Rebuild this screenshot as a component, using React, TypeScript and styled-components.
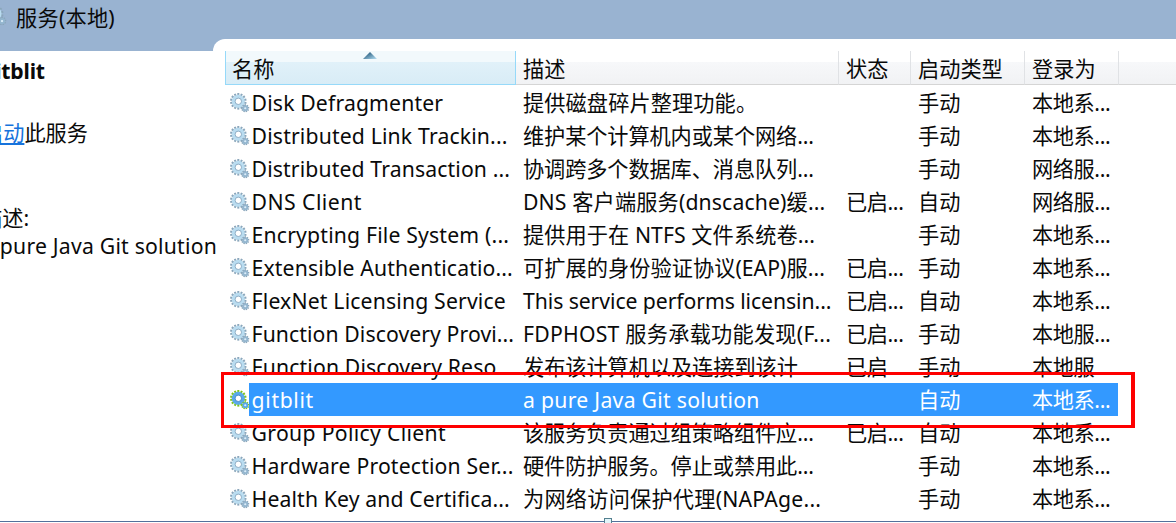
import React from "react";
import styled, { createGlobalStyle } from "styled-components";

const GlobalStyle = createGlobalStyle`
  * { box-sizing: border-box; }
  html, body { margin: 0; padding: 0; overflow: hidden; }
  body { font-family: "Noto Sans", "Noto Sans CJK SC", sans-serif; font-size: 21.2px; color: #0a0a0a; }
`;

const Window = styled.div`
  position: relative;
  width: 1176px;
  height: 523px;
  overflow: hidden;
  display: flex;
  flex-direction: column;
  background: #99b3d1;
`;

const TitleBar = styled.header`
  flex: none;
  display: flex;
  align-items: center;
  height: 39px;
  padding-bottom: 4px;
  line-height: 34px;
  letter-spacing: 0.25px;
`;

const TitleIcon = styled.span`
  flex: none;
  display: flex;
  width: 20px;
  height: 20px;
  margin: -6px 10px 0 -14px;
`;

const Body = styled.div`
  flex: 1;
  min-height: 0;
  display: flex;
`;

const DetailPane = styled.aside`
  position: relative;
  z-index: 1;
  flex: none;
  width: 213px;
  margin-top: 12px;
  padding-top: 4px;
  background: #fff;
`;

const DetailLine = styled.div<{ $gap?: number; $bold?: boolean; $shift: number; $track?: number }>`
  margin-top: ${(p) => p.$gap ?? 0}px;
  margin-left: ${(p) => p.$shift}px;
  height: 28px;
  line-height: 28px;
  white-space: nowrap;
  font-weight: ${(p) => (p.$bold ? 700 : 400)};
  letter-spacing: ${(p) => p.$track ?? 0}px;
`;

const StartLink = styled.a`
  color: #1673dc;
  text-decoration: underline;
  text-decoration-thickness: 2px;
  text-underline-offset: 2px;
`;

const ListPane = styled.main`
  flex: 1;
  min-width: 0;
  padding: 12px 0 0 12px;
  border-top-left-radius: 12px;
  background: #fff;
`;

const columns = "291px 323px 72px 114px 94px 1fr";

const HeaderRow = styled.div`
  display: grid;
  grid-template-columns: ${columns};
  height: 35px;
`;

const HeaderCell = styled.div<{ $sorted?: boolean }>`
  position: relative;
  padding-left: ${(p) => (p.$sorted ? 6 : 7)}px;
  line-height: 36px;
  height: 34px;
  border-right: 1px solid ${(p) => (p.$sorted ? "#96d9f9" : "#e0e2e5")};
  border-left: ${(p) => (p.$sorted ? "1px solid #96d9f9" : "none")};
  border-bottom: 1px solid ${(p) => (p.$sorted ? "#96d9f9" : "#d5d5d5")};
  background: ${(p) =>
    p.$sorted
      ? "linear-gradient(#f2f9fc 0 11px, #e1f1f9 11px, #d8ecf6 100%)"
      : "linear-gradient(#fff 0 11px, #f7f8fa 11px, #f1f2f4 100%)"};
  &:last-child { border-right: none; }
`;

const SortArrow = styled.svg`
  position: absolute;
  left: 136px;
  top: 1px;
`;

const Row = styled.div<{ $selected?: boolean }>`
  display: grid;
  grid-template-columns: ${columns};
  height: 33px;
  line-height: 33px;
  color: ${(p) => (p.$selected ? "#fff" : "inherit")};
  background: ${(p) =>
    p.$selected ? "linear-gradient(90deg, #fff 24px, #3399ff 24px 893px, #fff 893px)" : "none"};
`;

const Cell = styled.div<{ $track?: number }>`
  display: flex;
  align-items: center;
  min-width: 0;
  padding-left: 7px;
  white-space: nowrap;
  letter-spacing: ${(p) => p.$track ?? 0}px;
`;

const NameCell = styled(Cell)`
  padding-left: 5px;
  gap: 2.6px;
`;

const Highlight = styled.div`
  position: absolute;
  left: 221px;
  top: 372px;
  width: 914px;
  height: 56px;
  border: solid #fe0000;
  border-width: 3px 4px 3px 3px;
`;

const BottomEdge = styled.div`
  position: absolute;
  z-index: 2;
  left: 0;
  right: 0;
  top: 521px;
  height: 1px;
  background: #53709b;
`;

const Handle = styled.div`
  position: absolute;
  z-index: 3;
  left: 604px;
  top: 518px;
  width: 8px;
  height: 8px;
  border: 1px solid #53808f;
  background: #e2f4fa;
`;

const teeth = (n: number) => Array.from({ length: n }, (_, i) => (360 / n) * i);

const GearSvg = styled.svg`
  flex: none;
  overflow: visible;
`;

function Gear({ active, size = 19 }: { active?: boolean; size?: number }) {
  const edge = active ? "#7fc41c" : "#8aa6bb";
  const face = active ? "#5aa9ea" : "#b9dcf0";
  const rim = active ? "#3d7fc0" : "#7f9fba";
  return (
    <GearSvg width={size} height={size} viewBox="0 0 19 19">
      {teeth(14).map((a) => (
        <rect key={a} x="7.3" y="0" width="2" height="2.6" fill={edge} transform={`rotate(${a} 8.3 8.3)`} />
      ))}
      <circle cx="8.3" cy="8.3" r="4.8" fill="#fff" stroke={face} strokeWidth="3.4" />
      <circle cx="8.3" cy="8.3" r="3.2" fill="none" stroke={rim} strokeWidth="0.8" />
      {teeth(9).map((a) => (
        <rect key={a} x="14.5" y="11.2" width="1.5" height="2" fill={edge} transform={`rotate(${a} 15.25 15.25)`} />
      ))}
      <circle cx="15.25" cy="15.25" r="2" fill="#dceefa" stroke={active ? "#5aa9ea" : "#94b6cf"} strokeWidth="1.8" />
    </GearSvg>
  );
}

type Service = {
  name: string;
  desc: string;
  status?: string;
  start: string;
  logon: string;
  selected?: boolean;
  nameTrack: number;
  descTrack: number;
};

const services: Service[] = [
  { name: "Disk Defragmenter", desc: "提供磁盘碎片整理功能。", start: "手动", logon: "本地系...", nameTrack: 0.15, descTrack: 0.1 },
  { name: "Distributed Link Trackin...", desc: "维护某个计算机内或某个网络...", start: "手动", logon: "本地系...", nameTrack: 0.16, descTrack: -0.1 },
  { name: "Distributed Transaction ...", desc: "协调跨多个数据库、消息队列...", start: "手动", logon: "网络服...", nameTrack: 0.13, descTrack: -0.1 },
  { name: "DNS Client", desc: "DNS 客户端服务(dnscache)缓...", status: "已启...", start: "自动", logon: "网络服...", nameTrack: 0.45, descTrack: 0.14 },
  { name: "Encrypting File System (...", desc: "提供用于在 NTFS 文件系统卷...", start: "手动", logon: "本地系...", nameTrack: 0.18, descTrack: 0.08 },
  { name: "Extensible Authenticatio...", desc: "可扩展的身份验证协议(EAP)服...", status: "已启...", start: "手动", logon: "本地系...", nameTrack: 0.13, descTrack: 0.05 },
  { name: "FlexNet Licensing Service", desc: "This service performs licensin...", status: "已启...", start: "自动", logon: "本地系...", nameTrack: 0.17, descTrack: -0.07 },
  { name: "Function Discovery Provi...", desc: "FDPHOST 服务承载功能发现(F...", status: "已启...", start: "手动", logon: "本地服...", nameTrack: 0.09, descTrack: 0.24 },
  { name: "Function Discovery Reso...", desc: "发布该计算机以及连接到该计...", status: "已启...", start: "手动", logon: "本地服...", nameTrack: 0.15, descTrack: -0.05 },
  { name: "gitblit", desc: "a pure Java Git solution", start: "自动", logon: "本地系...", selected: true, nameTrack: 0.65, descTrack: 0.29 },
  { name: "Group Policy Client", desc: "该服务负责通过组策略组件应...", status: "已启...", start: "自动", logon: "本地系...", nameTrack: 0.32, descTrack: -0.1 },
  { name: "Hardware Protection Ser...", desc: "硬件防护服务。停止或禁用此...", start: "手动", logon: "本地系...", nameTrack: 0.17, descTrack: -0.1 },
  { name: "Health Key and Certifica...", desc: "为网络访问保护代理(NAPAge...", start: "手动", logon: "本地系...", nameTrack: 0.13, descTrack: 0.22 },
];

export default function App() {
  return (
    <Window>
      <GlobalStyle />
      <TitleBar>
        <TitleIcon><Gear size={20} /></TitleIcon>
        服务(本地)
      </TitleBar>
      <Body>
        <DetailPane>
          <DetailLine $bold $shift={-18} $gap={2} $track={-0.2}>gitblit</DetailLine>
          <DetailLine $shift={-18} $gap={34}><StartLink>启动</StartLink>此服务</DetailLine>
          <DetailLine $shift={-19} $gap={57}>描述:</DetailLine>
          <DetailLine $shift={-18} $track={0.22}>a pure Java Git solution</DetailLine>
        </DetailPane>
        <ListPane>
          <HeaderRow>
            <HeaderCell $sorted>
              名称
              <SortArrow width="16" height="8" viewBox="0 0 16 8">
                <defs>
                  <linearGradient id="arrow" x1="0" y1="0" x2="1" y2="1">
                    <stop offset="0.3" stopColor="#3c6f8f" />
                    <stop offset="1" stopColor="#b5e0f5" />
                  </linearGradient>
                </defs>
                <path d="M8 0 L15 7 H1 Z" fill="url(#arrow)" />
              </SortArrow>
            </HeaderCell>
            <HeaderCell>描述</HeaderCell>
            <HeaderCell>状态</HeaderCell>
            <HeaderCell>启动类型</HeaderCell>
            <HeaderCell>登录为</HeaderCell>
            <HeaderCell />
          </HeaderRow>
          {services.map((s) => (
            <Row key={s.name} $selected={s.selected}>
              <NameCell $track={s.nameTrack}><Gear active={s.selected} />{s.name}</NameCell>
              <Cell $track={s.descTrack}>{s.desc}</Cell>
              <Cell $track={-0.4}>{s.status}</Cell>
              <Cell>{s.start}</Cell>
              <Cell $track={-0.4}>{s.logon}</Cell>
            </Row>
          ))}
        </ListPane>
      </Body>
      <Highlight />
      <BottomEdge />
      <Handle />
    </Window>
  );
}
